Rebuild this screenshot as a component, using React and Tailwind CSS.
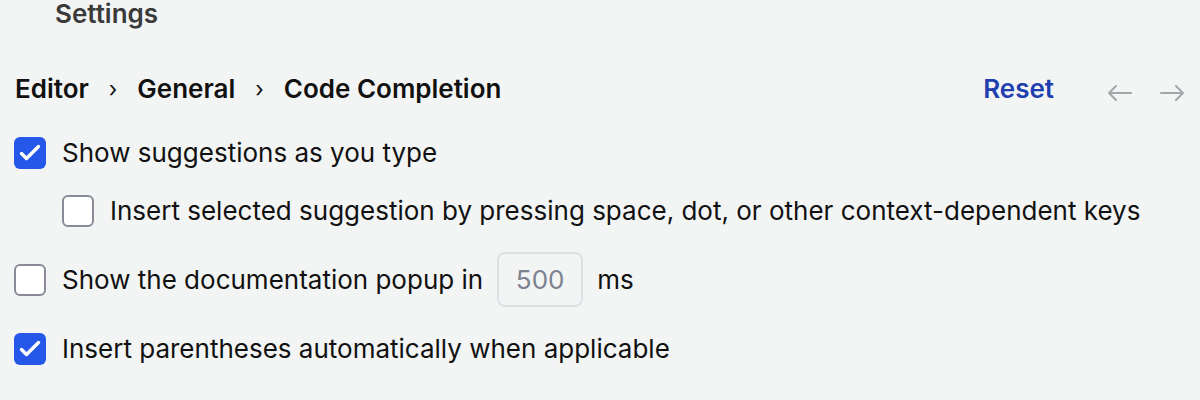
import React from 'react';

function Check({ checked }) {
  if (checked) {
    return (
      <span className="w-[32px] h-[32px] rounded-[6px] bg-[#2558e8] flex shrink-0">
        <svg width="32" height="32" viewBox="0 0 32 32" fill="none">
          <path d="M7.5 16.5L12.5 21.5L24.5 9.5" stroke="#fff" strokeWidth="3.4" strokeLinecap="round" strokeLinejoin="round" />
        </svg>
      </span>
    );
  }
  return <span className="w-[32px] h-[32px] rounded-[6px] border-2 border-[#898c98] bg-white shrink-0 box-border" />;
}

function Row({ checked, children, className = '' }) {
  return (
    <div className={`flex items-center gap-[16px] ${className}`}>
      <Check checked={checked} />
      <div className="flex items-center text-[26px] leading-none text-[#111]">{children}</div>
    </div>
  );
}

export default function App() {
  return (
    <div className="w-[1200px] h-[400px] bg-[#f3f5f5] overflow-hidden font-['Inter',sans-serif]">
      <div className="pl-[55px] h-[28px] text-[26px] font-semibold text-[#3a3a3a] leading-[28px]">
        Settings
      </div>
      <div className="flex items-center justify-between pl-[15px] pr-[14px] mt-[43px] h-[36px]">
        <div className="flex items-center text-[26px] leading-none font-semibold text-[#111]">
          <span>Editor</span>
          <span className="mx-[20px] text-[22px] font-normal">›</span>
          <span>General</span>
          <span className="mx-[20px] text-[22px] font-normal">›</span>
          <span>Code Completion</span>
        </div>
        <div className="flex items-center">
          <span className="text-[26px] leading-none font-semibold text-[#1f3fae] mr-[52px]">Reset</span>
          <svg width="28" height="20" viewBox="0 0 28 20" fill="none" className="mt-[8px]">
            <path d="M25 10H3M10 3L3 10l7 7" stroke="#a3a6aa" strokeWidth="2" strokeLinecap="round" strokeLinejoin="round" />
          </svg>
          <svg width="28" height="20" viewBox="0 0 28 20" fill="none" className="ml-[24px] mt-[8px]">
            <path d="M3 10h22M18 3l7 7-7 7" stroke="#a3a6aa" strokeWidth="2" strokeLinecap="round" strokeLinejoin="round" />
          </svg>
        </div>
      </div>
      <div className="pl-[14px] mt-[30px]">
        <Row checked>Show suggestions as you type</Row>
        <Row className="ml-[48px] mt-[26px]">Insert selected suggestion by pressing space, dot, or other context-dependent keys</Row>
        <Row className="mt-[25px]">
          <span>Show the documentation popup in</span>
          <span className="ml-[14px] w-[86px] h-[55px] rounded-[8px] border-2 border-[#dde1e6] bg-[#f3f5f5] flex items-center justify-center text-[#7c8290]">500</span>
          <span className="ml-[14px]">ms</span>
        </Row>
        <Row checked className="mt-[26px]">Insert parentheses automatically when applicable</Row>
      </div>
    </div>
  );
}
